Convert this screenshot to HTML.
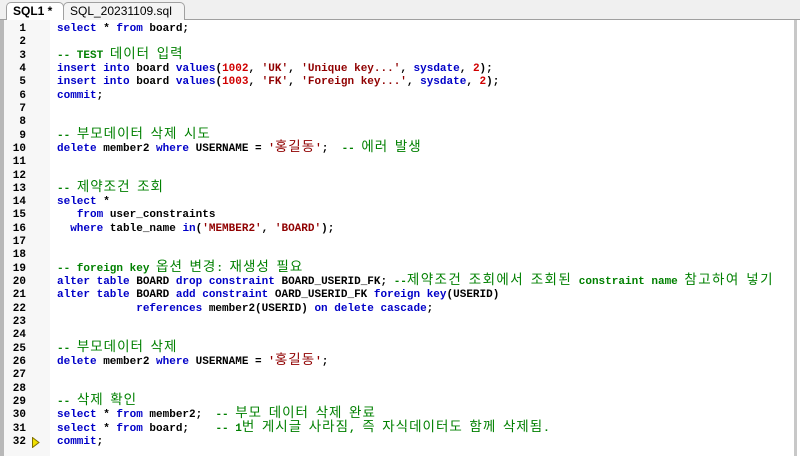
<!DOCTYPE html>
<html><head><meta charset="utf-8">
<style>
html,body{margin:0;padding:0;width:800px;height:456px;overflow:hidden;background:#fff}
#tabs{position:absolute;left:0;top:0;width:800px;height:19px;background:#f0f0f0;border-bottom:1px solid #a0a0a0}
.tab{position:absolute;top:2px;height:17px;font:12px "Liberation Sans",sans-serif;line-height:17px;padding:0 6px;border:1px solid #a0a0a0;border-bottom:none;border-radius:5px 5px 0 0}
#ed{position:absolute;left:0;top:20px;width:797px;height:436px;border-left:4px solid #b8b8b8;border-right:3px solid #c8c8c8;box-sizing:border-box;background:#fff}
#gut{position:absolute;left:4px;top:20px;width:46px;height:436px;background:#f7f7f7}
.l{position:absolute;left:0;height:13.32px;white-space:pre;font:bold 11px "Liberation Mono",monospace;line-height:13.32px;color:#000}
.n{position:absolute;left:0;width:26px;text-align:right;height:13.32px;font:bold 11px "Liberation Mono",monospace;line-height:13.32px;color:#000}
.c{position:absolute;left:57px}
.b{color:#0000c8}.g{color:#008000}.s{color:#900000}.r{color:#d00000}
.k{font-family:"Noto Sans CJK KR","NanumGothic",sans-serif;font-weight:normal;font-size:13.5px;letter-spacing:1px;line-height:0}
.k i{font:bold 11px "Liberation Mono",monospace;letter-spacing:0;font-style:normal}
</style></head><body>
<div id="tabs">
<div class="tab" style="left:6px;width:44px;background:#fff;font-weight:bold;z-index:2">SQL1 *</div>
<div class="tab" style="left:63px;width:108px;background:#f4f4f4">SQL_20231109.sql *</div>
</div>
<div id="ed"></div>
<div id="gut"></div>
<div id="code" style="position:absolute;left:0;top:23px;width:800px">
<div class="n" style="top:0">1</div><div class="l c" style="top:0"><span class="b">select</span> * <span class="b">from</span> board;</div>
<div class="n" style="top:13.32px">2</div>
<div class="n" style="top:26.64px">3</div><div class="l c g" style="top:26.64px">-- TEST <span class="k">데이터<i> </i>입력</span></div>
<div class="n" style="top:39.96px">4</div><div class="l c" style="top:39.96px"><span class="b">insert into</span> board <span class="b">values</span>(<span class="r">1002</span>, <span class="s">'UK'</span>, <span class="s">'Unique key...'</span>, <span class="b">sysdate</span>, <span class="r">2</span>);</div>
<div class="n" style="top:53.28px">5</div><div class="l c" style="top:53.28px"><span class="b">insert into</span> board <span class="b">values</span>(<span class="r">1003</span>, <span class="s">'FK'</span>, <span class="s">'Foreign key...'</span>, <span class="b">sysdate</span>, <span class="r">2</span>);</div>
<div class="n" style="top:66.6px">6</div><div class="l c" style="top:66.6px"><span class="b">commit</span>;</div>
<div class="n" style="top:79.92px">7</div>
<div class="n" style="top:93.24px">8</div>
<div class="n" style="top:106.56px">9</div><div class="l c g" style="top:106.56px">-- <span class="k">부모데이터<i> </i>삭제<i> </i>시도</span></div>
<div class="n" style="top:119.88px">10</div><div class="l c" style="top:119.88px"><span class="b">delete</span> member2 <span class="b">where</span> USERNAME = <span class="s">'<span class="k">홍길동</span>'</span>;  <span class="g">-- <span class="k">에러<i> </i>발생</span></span></div>
<div class="n" style="top:133.2px">11</div>
<div class="n" style="top:146.52px">12</div>
<div class="n" style="top:159.84px">13</div><div class="l c g" style="top:159.84px">-- <span class="k">제약조건<i> </i>조회</span></div>
<div class="n" style="top:173.16px">14</div><div class="l c" style="top:173.16px"><span class="b">select</span> *</div>
<div class="n" style="top:186.48px">15</div><div class="l c" style="top:186.48px">   <span class="b">from</span> user_constraints</div>
<div class="n" style="top:199.8px">16</div><div class="l c" style="top:199.8px">  <span class="b">where</span> table_name <span class="b">in</span>(<span class="s">'MEMBER2'</span>, <span class="s">'BOARD'</span>);</div>
<div class="n" style="top:213.12px">17</div>
<div class="n" style="top:226.44px">18</div>
<div class="n" style="top:239.76px">19</div><div class="l c g" style="top:239.76px">-- foreign key <span class="k">옵션<i> </i>변경<i>: </i>재생성<i> </i>필요</span></div>
<div class="n" style="top:253.08px">20</div><div class="l c" style="top:253.08px"><span class="b">alter table</span> BOARD <span class="b">drop constraint</span> BOARD_USERID_FK; <span class="g">--<span class="k" style="letter-spacing:1.4px">제약조건<i> </i>조회에서<i> </i>조회된</span> constraint name <span class="k" style="letter-spacing:1.4px">참고하여<i> </i>넣기</span></span></div>
<div class="n" style="top:266.4px">21</div><div class="l c" style="top:266.4px"><span class="b">alter table</span> BOARD <span class="b">add constraint</span> OARD_USERID_FK <span class="b">foreign key</span>(USERID)</div>
<div class="n" style="top:279.72px">22</div><div class="l c" style="top:279.72px">            <span class="b">references</span> member2(USERID) <span class="b">on delete cascade</span>;</div>
<div class="n" style="top:293.04px">23</div>
<div class="n" style="top:306.36px">24</div>
<div class="n" style="top:319.68px">25</div><div class="l c g" style="top:319.68px">-- <span class="k">부모데이터<i> </i>삭제</span></div>
<div class="n" style="top:333px">26</div><div class="l c" style="top:333px"><span class="b">delete</span> member2 <span class="b">where</span> USERNAME = <span class="s">'<span class="k">홍길동</span>'</span>;</div>
<div class="n" style="top:346.32px">27</div>
<div class="n" style="top:359.64px">28</div>
<div class="n" style="top:372.96px">29</div><div class="l c g" style="top:372.96px">-- <span class="k">삭제<i> </i>확인</span></div>
<div class="n" style="top:386.28px">30</div><div class="l c" style="top:386.28px"><span class="b">select</span> * <span class="b">from</span> member2;  <span class="g">-- <span class="k">부모<i> </i>데이터<i> </i>삭제<i> </i>완료</span></span></div>
<div class="n" style="top:399.6px">31</div><div class="l c" style="top:399.6px"><span class="b">select</span> * <span class="b">from</span> board;    <span class="g">-- 1<span class="k">번<i> </i>게시글<i> </i>사라짐<i>, </i>즉<i> </i>자식데이터도<i> </i>함께<i> </i>삭제됨<i>.</i></span></span></div>
<div class="n" style="top:412.92px">32</div><div class="l c" style="top:412.92px"><span class="b">commit</span>;</div>
<svg style="position:absolute;left:32px;top:414px" width="8" height="11"><polygon points="0.5,0.5 7,5.5 0.5,10.5" fill="#f0e000" stroke="#807000"/></svg>
</div>
</body></html>
